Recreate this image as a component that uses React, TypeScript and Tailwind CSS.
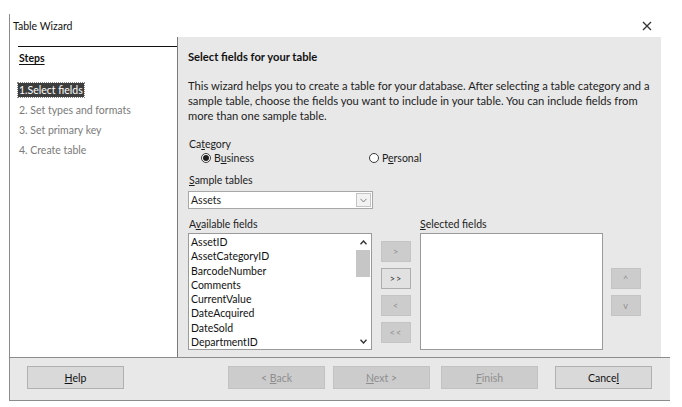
import React from "react";

const fields = [
  "AssetID",
  "AssetCategoryID",
  "BarcodeNumber",
  "Comments",
  "CurrentValue",
  "DateAcquired",
  "DateSold",
  "DepartmentID",
];

const Radio = ({ checked }: { checked?: boolean }) => (
  <span className="w-[10px] h-[10px] rounded-full border border-[#3a3a3a] bg-white flex items-center justify-center">
    {checked && <span className="w-[6px] h-[6px] rounded-full bg-[#1e1e1e]" />}
  </span>
);

const MoveBtn = ({ label, enabled }: { label: string; enabled?: boolean }) =>
  enabled ? (
    <div className="w-[30px] h-[21px] flex items-center justify-center text-[9px] tracking-[1px] bg-[#e1e1e1] border border-[#adadad] text-[#333]">
      {label}
    </div>
  ) : (
    <div className="w-[30px] h-[21px] flex items-center justify-center text-[9px] tracking-[1px] bg-[#cccccc] border border-[#c4c4c4] text-[#8f8f8f]">
      {label}
    </div>
  );

const Chevron = ({ up, color = "#333", width = 1.4 }: { up?: boolean; color?: string; width?: number }) => (
  <svg width="7" height="5" viewBox="0 0 7 5">
    <path d={up ? "M0.5 4.2 L3.5 1 L6.5 4.2" : "M0.5 0.8 L3.5 4 L6.5 0.8"} fill="none" stroke={color} strokeWidth={width} />
  </svg>
);

const FooterBtn = ({ children, enabled }: { children: React.ReactNode; enabled?: boolean }) =>
  enabled ? (
    <div className="w-[97px] h-[23px] flex items-center justify-center bg-[#d9d9d9] border border-[#b0b0b0] text-[#111]">
      {children}
    </div>
  ) : (
    <div className="w-[97px] h-[23px] flex items-center justify-center bg-[#cccccc] border border-[#c2c2c2] text-[#8e8e8e]">
      {children}
    </div>
  );

export default function App() {
  return (
    <div className="w-[682px] h-[407px] bg-white pt-[14px] pl-[9px] font-['Lato','Liberation_Sans',sans-serif] text-[10.5px] leading-[14px] text-[#1c1c1c] overflow-hidden">
      {/* title bar */}
      <div className="flex items-center justify-between h-[23px] border-l border-[#8c8c8c] pl-[3px] pr-[30px]">
        <span className="text-[#111]">Table Wizard</span>
        <svg width="10" height="10" viewBox="0 0 10 10">
          <path d="M1 1 L9 9 M9 1 L1 9" stroke="#333" strokeWidth="1.3" />
        </svg>
      </div>

      <div className="w-[661px] border-l border-b border-[#8c8c8c]">
        {/* body */}
        <div className="flex h-[320px]">
          {/* steps */}
          <div className="w-[167px] pl-[8px] pt-[9px] bg-white">
            <div className="border-t border-[#111]" />
            <div className="mt-[4px] pl-[1px] font-bold underline underline-offset-2 text-[#111]">Steps</div>
            <div className="mt-[18px] flex flex-col gap-[6px] text-[#7a7a7a]">
              <span className="self-start bg-[#3d3d3d] text-white px-[1px] outline outline-1 outline-dotted outline-[#888]">1.Select fields</span>
              <span className="pl-[1px]">2. Set types and formats</span>
              <span className="pl-[1px]">3. Set primary key</span>
              <span className="pl-[1px]">4. Create table</span>
            </div>
          </div>

          {/* main panel */}
          <div className="w-[484px] bg-[#e8e8e8] border-l border-[#7a7a7a] pl-[10px] pt-[13px]">
            <div className="font-bold text-[11.2px] text-[#111]">Select fields for your table</div>
            <p className="mt-[14px] text-[11.2px] leading-[15px] w-[466px]">
              This wizard helps you to create a table for your database. After selecting a table category and a sample table, choose the fields you want to include in your table. You can include fields from more than one sample table.
            </p>
            <div className="mt-[14px] pl-[1px]">
              Ca<u>t</u>egory
            </div>
            <div className="flex items-center h-[14px]">
              <div className="flex items-center gap-[3px] pl-[13px] w-[181px]">
                <Radio checked />
                <span>
                  B<u>u</u>siness
                </span>
              </div>
              <div className="flex items-center gap-[3px]">
                <Radio />
                <span>
                  P<u>e</u>rsonal
                </span>
              </div>
            </div>
            <div className="mt-[8px] pl-[1px]">
              <u>S</u>ample tables
            </div>
            <div className="mt-[4px] w-[185px] h-[18px] bg-white border border-[#a8a8a8] flex items-center justify-between pl-[2px] pr-[1px]">
              <span>Assets</span>
              <div className="w-[15px] h-[14px] border border-[#c4c4c4] bg-[#f2f2f2] flex items-center justify-center">
                <Chevron color="#808080" width={1} />
              </div>
            </div>

            {/* field lists */}
            <div className="mt-[8px] flex">
              <div className="flex flex-col">
                <span className="pl-[1px]">
                  A<u>v</u>ailable fields
                </span>
                <div className="mt-[2px] w-[184px] h-[117px] bg-white border border-[#9a9a9a] flex">
                  <div className="flex-1 pl-[2px] pt-[1px] leading-[14.3px] text-[#111] overflow-hidden">
                    {fields.map((f) => (
                      <div key={f}>{f}</div>
                    ))}
                  </div>
                  <div className="w-[16px] flex flex-col items-center">
                    <div className="h-[16px] flex items-center justify-center">
                      <Chevron up />
                    </div>
                    <div className="w-[14px] h-[27px] bg-[#c6c6c6]" />
                    <div className="flex-1" />
                    <div className="h-[16px] flex items-center justify-center">
                      <Chevron />
                    </div>
                  </div>
                </div>
              </div>

              <div className="ml-[9px] pt-[24px] flex flex-col gap-[6px]">
                <MoveBtn label=">" />
                <MoveBtn label=">>" enabled />
                <MoveBtn label="<" />
                <MoveBtn label="<<" />
              </div>

              <div className="ml-[9px] flex flex-col">
                <span>
                  <u>S</u>elected fields
                </span>
                <div className="mt-[2px] w-[183px] h-[117px] bg-white border border-[#9a9a9a]" />
              </div>

              <div className="ml-[8px] pt-[51px] flex flex-col gap-[6px]">
                <MoveBtn label="^" />
                <MoveBtn label="v" />
              </div>
            </div>
          </div>
        </div>

        {/* footer */}
        <div className="h-[43px] bg-[#e8e8e8] border-t border-[#8c8c8c] w-[660px] flex items-start pt-[8px] pl-[17px]">
          <FooterBtn enabled>
            <span>
              <u>H</u>elp
            </span>
          </FooterBtn>
          <div className="ml-[104px]">
            <FooterBtn>
              <span>
                &lt; <u>B</u>ack
              </span>
            </FooterBtn>
          </div>
          <div className="ml-[8px]">
            <FooterBtn>
              <span>
                <u>N</u>ext &gt;
              </span>
            </FooterBtn>
          </div>
          <div className="ml-[11px]">
            <FooterBtn>
              <span>
                <u>F</u>inish
              </span>
            </FooterBtn>
          </div>
          <div className="ml-[17px]">
            <FooterBtn enabled>
              <span>
                Cance<u>l</u>
              </span>
            </FooterBtn>
          </div>
        </div>
      </div>
    </div>
  );
}
